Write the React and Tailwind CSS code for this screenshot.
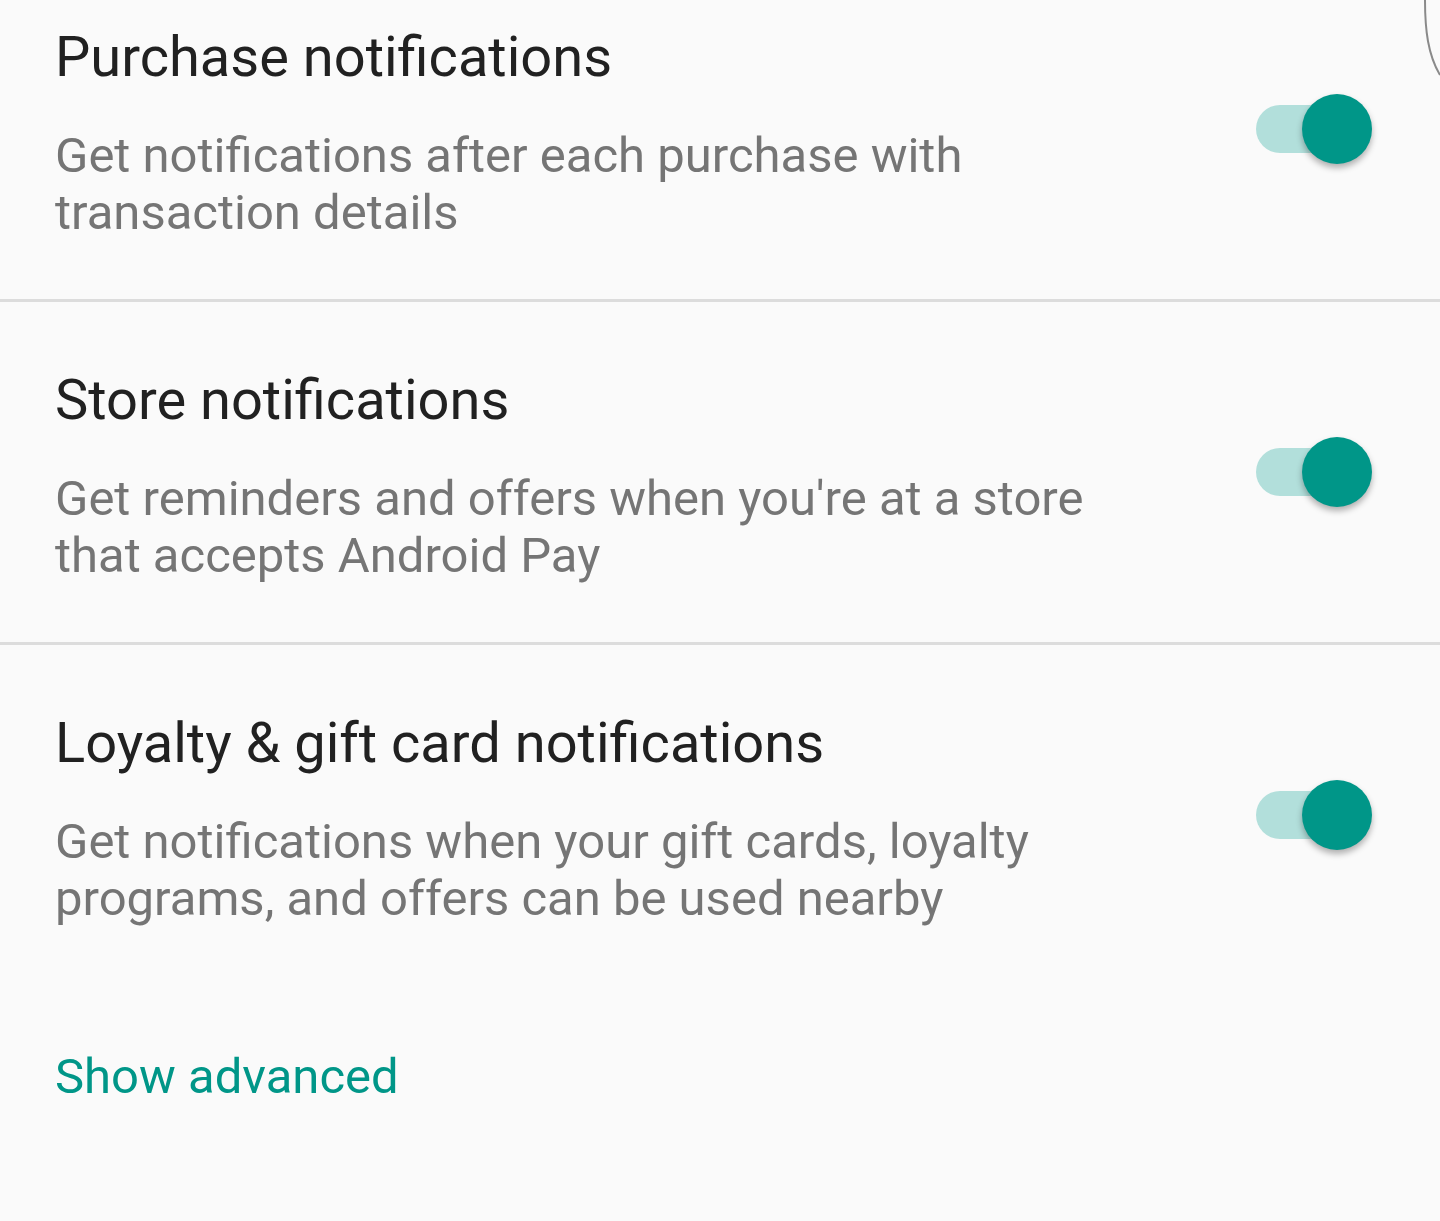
const settings = [
  {
    title: "Purchase notifications",
    body: "Get notifications after each purchase with transaction details",
  },
  {
    title: "Store notifications",
    body: "Get reminders and offers when you're at a store that accepts Android Pay",
  },
  {
    title: "Loyalty & gift card notifications",
    body: "Get notifications when your gift cards, loyalty programs, and offers can be used nearby",
  },
];

function Toggle() {
  return (
    <div className="relative h-[70px] w-[116px] shrink-0">
      <div className="absolute left-0 top-[11px] h-[48px] w-[112px] rounded-full bg-[#b2dfdb]" />
      <div className="absolute right-0 top-0 h-[70px] w-[70px] rounded-full bg-[#009688] shadow-[0_4px_6px_rgba(0,0,0,0.3)]" />
    </div>
  );
}

function SettingRow({ title, body, last }) {
  return (
    <div className={last ? "" : "border-b-[3px] border-[#dcdcdc]"}>
      <div className="flex items-center pl-[55px] pr-[68px] pt-[66px] pb-[58px]">
        <div className="flex-1">
          <div className="text-[56px] leading-[64px] text-[#212121]">{title}</div>
          <div className="mt-[38px] max-w-[1085px] text-[49px] leading-[57px] text-[#757575]">{body}</div>
        </div>
        <div className="-mt-2">
          <Toggle />
        </div>
      </div>
    </div>
  );
}

export default function App() {
  return (
    <div
      className="relative h-[1221px] w-[1440px] overflow-hidden bg-[#fafafa]"
      style={{ fontFamily: "Roboto, 'Noto Sans', sans-serif" }}
    >
      <div className="-mt-[41px]">
        {settings.map((s, i) => (
          <SettingRow key={s.title} {...s} last={i === settings.length - 1} />
        ))}
      </div>
      <div className="pl-[55px] pt-[63px] text-[49px] leading-[57px] text-[#009688]">Show advanced</div>
      {/* device screen edge */}
      <svg className="absolute right-0 top-0" width="20" height="90" viewBox="0 0 20 90">
        <path d="M5 0 C5 30 8 55 20 75" fill="none" stroke="#8a8a8a" strokeWidth="2" />
      </svg>
    </div>
  );
}
